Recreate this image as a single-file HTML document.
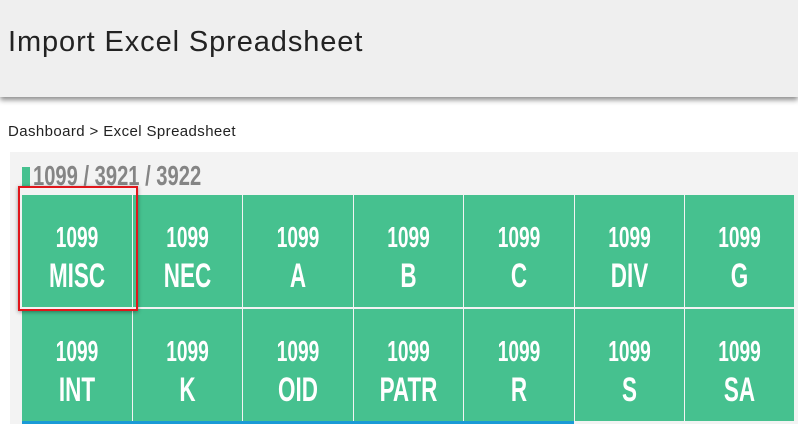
<!DOCTYPE html>
<html><head><style>
body{margin:0;width:798px;height:424px;overflow:hidden;background:#fff;font-family:"Liberation Sans",sans-serif;position:relative}
.hdr{position:absolute;left:0;top:0;width:798px;height:97px;background:#efefef;box-shadow:0 3px 5px rgba(0,0,0,.45)}
.hdr h1{margin:0;position:absolute;left:8px;top:26px;font-weight:normal;font-size:29px;color:#222;letter-spacing:0.9px}
.bc{position:absolute;left:8px;top:123px;font-size:15px;color:#222;letter-spacing:.4px}
.panel{position:absolute;left:10px;top:152px;width:788px;height:272px;background:#f3f3f3}
.bar{position:absolute;left:22px;top:167px;width:8px;height:20px;background:#46c18f}
.ttxt{position:absolute;left:33px;top:160px;font-size:28px;font-weight:bold;color:#858585;transform:scaleX(.72);transform-origin:0 0;white-space:nowrap}
.t{position:absolute;height:112px;background:#46c18f;color:#fff;text-align:center;font-weight:bold}
.t div{transform:scaleX(.66);white-space:nowrap}
.a{position:absolute;left:0;right:0;top:27px;font-size:29px}
.b{position:absolute;left:0;right:0;top:62px;font-size:34px}
.blue{position:absolute;left:22px;top:421px;width:552px;height:3px;background:#1a9ad6}
.sel{position:absolute;left:18px;top:186px;width:116px;height:121px;border:2px solid #e0161b;box-shadow:0 1px 4px rgba(0,0,0,.4)}
.c1{left:22px;width:110px}.c2{left:133px;width:109px}.c3{left:243px;width:110px}.c4{left:354px;width:109px}.c5{left:464px;width:110px}.c6{left:575px;width:109px}.c7{left:685px;width:109px}
.r1{top:195px}.r2{top:309px}
</style></head><body>
<div class="hdr"><h1>Import Excel Spreadsheet</h1></div>
<div class="bc">Dashboard &gt; Excel Spreadsheet</div>
<div class="panel"></div>
<div class="bar"></div>
<div class="ttxt">1099 / 3921 / 3922</div>
<div class="blue"></div>
<div class="t c1 r1"><div class="a">1099</div><div class="b">MISC</div></div>
<div class="t c2 r1"><div class="a">1099</div><div class="b">NEC</div></div>
<div class="t c3 r1"><div class="a">1099</div><div class="b">A</div></div>
<div class="t c4 r1"><div class="a">1099</div><div class="b">B</div></div>
<div class="t c5 r1"><div class="a">1099</div><div class="b">C</div></div>
<div class="t c6 r1"><div class="a">1099</div><div class="b">DIV</div></div>
<div class="t c7 r1"><div class="a">1099</div><div class="b">G</div></div>
<div class="t c1 r2"><div class="a">1099</div><div class="b">INT</div></div>
<div class="t c2 r2"><div class="a">1099</div><div class="b">K</div></div>
<div class="t c3 r2"><div class="a">1099</div><div class="b">OID</div></div>
<div class="t c4 r2"><div class="a">1099</div><div class="b">PATR</div></div>
<div class="t c5 r2"><div class="a">1099</div><div class="b">R</div></div>
<div class="t c6 r2"><div class="a">1099</div><div class="b">S</div></div>
<div class="t c7 r2"><div class="a">1099</div><div class="b">SA</div></div>
<div class="sel"></div>
</body></html>
